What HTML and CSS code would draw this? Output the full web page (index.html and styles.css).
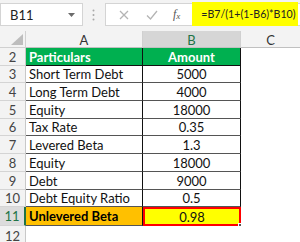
FILE: index.html
```html
<!DOCTYPE html>
<html>
<head>
<meta charset="utf-8">
<link rel="stylesheet" href="styles.css">
</head>
<body>
<div class="app">
  <div class="toolbar">
    <div class="namebox">
      <span class="ref">B11</span>
      <svg class="caret" width="7" height="4" viewBox="0 0 7 4"><path d="M0 0H7L3.5 4Z" fill="#6b6b6b"/></svg>
    </div>
    <svg class="grip" width="3" height="12" viewBox="0 0 3 12"><circle cx="1.5" cy="1.5" r="1" fill="#a8a8a8"/><circle cx="1.5" cy="6" r="1" fill="#a8a8a8"/><circle cx="1.5" cy="10.5" r="1" fill="#a8a8a8"/></svg>
    <div class="fbar">
      <svg class="ic" width="10" height="10" viewBox="0 0 10 10"><path d="M1 1L9 9M9 1L1 9" stroke="#b4b4b4" stroke-width="1.3"/></svg>
      <svg class="ic ok" width="12" height="10" viewBox="0 0 12 10"><path d="M1 5.5L4.5 9L11 1" stroke="#b4b4b4" stroke-width="1.3" fill="none"/></svg>
      <span class="fx">f<sub>x</sub></span>
      <div class="formula">=B7/(1+(1-B6)*B10)</div>
    </div>
  </div>
  <div class="sheet">
    <div class="corner"><svg width="12" height="11" viewBox="0 0 12 11"><path d="M12 0V11H0Z" fill="#bdbdbd"/></svg></div>
    <div class="colhead">A</div>
    <div class="colhead sel">B</div>
    <div class="colhead last">C</div>

    <div class="rowhead">2</div>
    <div class="cell a hdr">Particulars</div>
    <div class="cell b hdr">Amount</div>
    <div class="empty"></div>

    <div class="rowhead">3</div>
    <div class="cell a">Short Term Debt</div>
    <div class="cell b">5000</div>
    <div class="empty"></div>

    <div class="rowhead">4</div>
    <div class="cell a">Long Term Debt</div>
    <div class="cell b">4000</div>
    <div class="empty"></div>

    <div class="rowhead">5</div>
    <div class="cell a">Equity</div>
    <div class="cell b">18000</div>
    <div class="empty"></div>

    <div class="rowhead">6</div>
    <div class="cell a">Tax Rate</div>
    <div class="cell b">0.35</div>
    <div class="empty"></div>

    <div class="rowhead">7</div>
    <div class="cell a">Levered Beta</div>
    <div class="cell b">1.3</div>
    <div class="empty"></div>

    <div class="rowhead">8</div>
    <div class="cell a">Equity</div>
    <div class="cell b">18000</div>
    <div class="empty"></div>

    <div class="rowhead">9</div>
    <div class="cell a">Debt</div>
    <div class="cell b">9000</div>
    <div class="empty"></div>

    <div class="rowhead">10</div>
    <div class="cell a">Debt Equity Ratio</div>
    <div class="cell b">0.5</div>
    <div class="empty"></div>

    <div class="rowhead selrow">11</div>
    <div class="cell a result">Unlevered Beta</div>
    <div class="cell b answer">0.98<span class="handle"></span></div>
    <div class="empty"></div>

    <div class="rowhead">12</div>
    <div class="blank"></div>
    <div class="blank"></div>
    <div class="empty"></div>
  </div>
</div>
</body>
</html>
```

FILE: styles.css
```css
* { box-sizing: border-box; }
html, body { margin: 0; padding: 0; background: #fff; }
.app {
  width: 300px;
  height: 242px;
  overflow: hidden;
  font-family: "Lato", "Liberation Sans", sans-serif;
  color: #111;
}
.toolbar {
  height: 31px;
  background: #f3f3f3;
  display: flex;
  align-items: flex-start;
  padding-top: 3px;
}
.namebox {
  width: 83px;
  height: 23px;
  background: #fff;
  border: 1px solid #d4d4d4;
  display: flex;
  align-items: center;
  padding-left: 9px;
  padding-right: 7px;
  font-size: 13px;
  color: #222;
  flex: none;
}
.namebox .ref { flex: 1; }
.grip { margin: 6px 0 0 9px; flex: none; }
.fbar {
  margin-left: 10px;
  flex: 1;
  min-width: 0;
  height: 23px;
  background: #fff;
  border: 1px solid #d4d4d4;
  border-right: none;
  display: flex;
  align-items: center;
  padding-left: 13px;
}
.ic { flex: none; }
.ic.ok { margin-left: 17px; }
.fx {
  margin-left: 15px;
  font-family: "Liberation Serif", serif;
  font-style: italic;
  font-size: 12px;
  color: #555;
  flex: none;
}
.fx sub { font-size: 9px; vertical-align: -1px; }
.formula {
  margin-left: 12px;
  align-self: stretch;
  margin-top: -2px;
  margin-bottom: -1px;
  margin-right: 2px;
  flex: 1;
  min-width: 0;
  background: #ffff00;
  display: flex;
  align-items: center;
  padding-left: 9px;
  font-size: 10.6px;
  color: #222;
  white-space: nowrap;
}
.sheet {
  display: grid;
  grid-template-columns: 26px 117px 98px 59px;
  grid-template-rows: 17px 18px 17px 18px 18px 17px 18px 18px 18px 17px 19px 20px;
}
.corner {
  background: #f3f3f3;
  border-right: 1px solid #d0d0d0;
  border-bottom: 1px solid #d0d0d0;
  display: flex;
  align-items: flex-end;
  justify-content: flex-end;
  padding: 0 2px 2px 0;
}
.colhead {
  background: #f3f3f3;
  border-right: 1px solid #d0d0d0;
  border-bottom: 1px solid #c0c0c0;
  display: flex;
  align-items: center;
  justify-content: center;
  font-size: 13px;
  color: #333;
  padding-top: 1px;
}
.colhead.sel { background: #d6d6d6; color: #217346; }
.colhead.last { border-right: none; }
.rowhead {
  background: #f3f3f3;
  border-right: 1px solid #c8c8c8;
  border-bottom: 1px solid #d4d4d4;
  display: flex;
  align-items: center;
  justify-content: center;
  font-size: 13px;
  color: #444;
}
.rowhead.selrow { background: #dcdcdc; color: #217346; border-right: 2px solid #217346; }
.cell {
  border-right: 1px solid #111;
  border-bottom: 1px solid #555;
  display: flex;
  align-items: center;
  font-size: 13px;
  position: relative;
}
.cell.a { padding-left: 3px; }
.cell.b { justify-content: center; }
.cell.hdr { background: #00b050; color: #fff; font-weight: bold; border-bottom-color: #111; }
.cell.result { background: #ffc000; font-weight: bold; color: #000; }
.cell.answer { background: #ffff00; border: 2px solid #ff0000; }
.handle {
  position: absolute;
  right: -3px;
  bottom: -3px;
  width: 4px;
  height: 4px;
  background: #555;
  border: 1px solid #fff;
}
.empty { background: #fff; }
.blank { background: #fff; }
```
